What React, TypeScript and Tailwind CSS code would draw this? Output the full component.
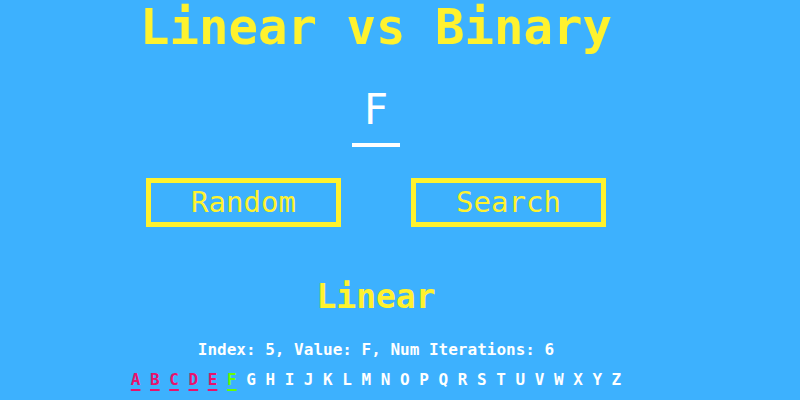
import React from "react";

const letters = "ABCDEFGHIJKLMNOPQRSTUVWXYZ".split("");
const found = 5;

export default function App() {
  return (
    <div className="w-[800px] h-[400px] overflow-hidden bg-[#3db1fe]">
      <div className="w-[752px] flex flex-col items-center font-['DejaVu_Sans_Mono',monospace]">
        <h1 className="text-[49px] leading-[56px] font-bold text-[#fff22e]">Linear vs Binary</h1>
        <div className="mt-[24px] w-[48px] pb-[3px] border-b-4 border-white text-center text-white text-[42px] leading-[60px] font-['DejaVu_Sans',sans-serif]">
          F
        </div>
        <div className="mt-[31px] flex gap-[70px]">
          <button className="w-[195px] h-[49px] border-[5px] border-[#fff22e] text-[#fff22e] text-[29px] leading-none">
            Random
          </button>
          <button className="w-[195px] h-[49px] border-[5px] border-[#fff22e] text-[#fff22e] text-[29px] leading-none">
            Search
          </button>
        </div>
        <h2 className="mt-[50px] text-[33px] leading-[40px] font-bold text-[#fff22e]">Linear</h2>
        <p className="mt-[23px] text-[16px] leading-[20px] font-bold text-white">
          Index: 5, Value: F, Num Iterations: 6
        </p>
        <div className="mt-[9px] flex gap-[9.6px] text-[16px] leading-[22px] font-bold">
          {letters.map((l, i) => (
            <span
              key={l}
              className={
                i < found
                  ? "text-[#e8126c] underline decoration-2 underline-offset-4"
                  : i === found
                  ? "text-[#66ff00] underline decoration-2 underline-offset-4"
                  : "text-white"
              }
            >
              {l}
            </span>
          ))}
        </div>
      </div>
    </div>
  );
}
